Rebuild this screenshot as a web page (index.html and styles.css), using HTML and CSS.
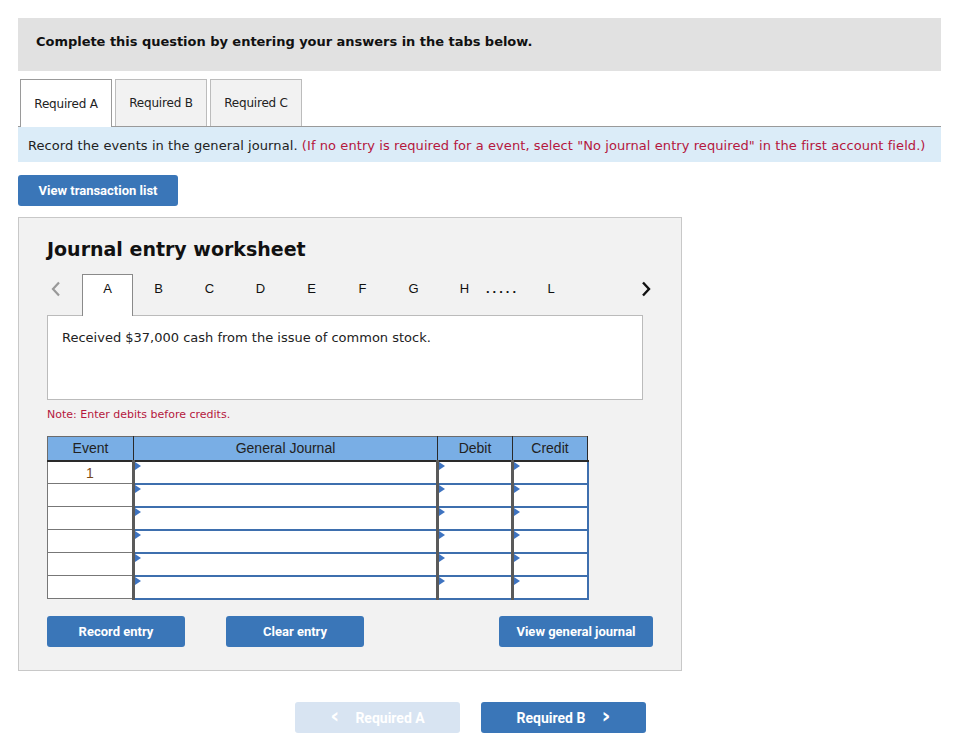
FILE: index.html
```html
<!DOCTYPE html>
<html>
<head>
<meta charset="utf-8">
<link rel="stylesheet" href="styles.css">
</head>
<body>
<div class="page">
  <div class="banner">Complete this question by entering your answers in the tabs below.</div>

  <div class="tabs">
    <div class="tab active">Required A</div>
    <div class="tab">Required B</div>
    <div class="tab">Required C</div>
  </div>

  <div class="instruction">Record the events in the general journal. <span class="red">(If no entry is required for a event, select "No journal entry required" in the first account field.)</span></div>

  <div class="btn-row">
    <button class="btn btn-wide">View transaction list</button>
  </div>

  <div class="worksheet">
    <h2 class="ws-title">Journal entry worksheet</h2>

    <div class="ws-nav">
      <span class="arrow left"><svg width="10" height="16" viewBox="0 0 10 16"><path d="M8 1.5 L2 8 L8 14.5" fill="none" stroke="#999" stroke-width="2.2"/></svg></span>
      <div class="letters">
        <span class="letter current">A</span>
        <span class="letter">B</span>
        <span class="letter">C</span>
        <span class="letter">D</span>
        <span class="letter">E</span>
        <span class="letter">F</span>
        <span class="letter">G</span>
        <span class="letter">H</span>
        <span class="dots">.....</span>
        <span class="letter">L</span>
      </div>
      <span class="arrow right"><svg width="10" height="16" viewBox="0 0 10 16"><path d="M2 1.5 L8 8 L2 14.5" fill="none" stroke="#111" stroke-width="2.4"/></svg></span>
    </div>

    <div class="desc">Received $37,000 cash from the issue of common stock.</div>

    <div class="note">Note: Enter debits before credits.</div>

    <table class="journal">
      <thead>
        <tr><th class="c-ev">Event</th><th class="c-gj">General Journal</th><th class="c-dr">Debit</th><th class="c-cr">Credit</th></tr>
      </thead>
      <tbody>
        <tr><td class="ev">1</td><td class="in"></td><td class="in"></td><td class="in"></td></tr>
        <tr><td class="ev"></td><td class="in"></td><td class="in"></td><td class="in"></td></tr>
        <tr><td class="ev"></td><td class="in"></td><td class="in"></td><td class="in"></td></tr>
        <tr><td class="ev"></td><td class="in"></td><td class="in"></td><td class="in"></td></tr>
        <tr><td class="ev"></td><td class="in"></td><td class="in"></td><td class="in"></td></tr>
        <tr><td class="ev"></td><td class="in"></td><td class="in"></td><td class="in"></td></tr>
      </tbody>
    </table>

    <div class="ws-actions">
      <button class="btn btn-act">Record entry</button>
      <button class="btn btn-act btn-clear">Clear entry</button>
      <span class="spacer"></span>
      <button class="btn btn-view">View general journal</button>
    </div>
  </div>

  <div class="bottom-nav">
    <button class="btn btn-nav disabled"><span class="chev">&lsaquo;</span>Required A</button>
    <button class="btn btn-nav">Required B<span class="chev chev-r">&rsaquo;</span></button>
  </div>
</div>
</body>
</html>
```

FILE: styles.css
```css
* { box-sizing: border-box; }
html, body { margin: 0; padding: 0; background: #fff; }
body { font-family: Verdana, "DejaVu Sans", sans-serif; color: #222; }
.page { padding: 18px 26px 0 18px; width: 967px; }

.banner {
  background: #e1e1e1;
  height: 53px;
  padding: 16px 18px 0 18px;
  font-size: 13px;
  font-weight: bold;
  color: #111;
  letter-spacing: -0.03px;
}

.tabs {
  display: flex;
  gap: 3px;
  padding: 8px 0 0 2px;
  border-bottom: 1px solid #9a9a9a;
  height: 56px;
}
.tab {
  width: 92px;
  height: 47px;
  border: 1px solid #bcbcbc;
  border-bottom: none;
  background: #f2f2f2;
  font-size: 12px;
  display: flex;
  align-items: center;
  justify-content: center;
  color: #222;
  letter-spacing: -0.2px;
}
.tab.active { background: #fff; border-color: #9a9a9a; height: 48px; margin-bottom: -1px; }

.instruction {
  background: #dbecf8;
  height: 35px;
  padding: 11px 10px 0 10px;
  font-size: 13px;
  color: #222;
  white-space: nowrap;
  letter-spacing: 0.08px;
}
.red { color: #b5173d; }

.btn-row { padding-top: 13px; display: flex; }
.btn {
  font-family: "Liberation Sans Narrow", "Arial Narrow", Roboto, sans-serif;
  font-weight: bold;
  color: #fff;
  background: #3a76b8;
  border: none;
  border-radius: 3px;
  font-size: 13px;
  cursor: pointer;
}
.btn-wide { width: 160px; height: 31px; }

.worksheet {
  margin-top: 11px;
  width: 664px;
  height: 454px;
  background: #f2f2f2;
  border: 1px solid #c8c8c8;
  padding: 0 38px 0 28px;
}
.ws-title {
  margin: 18px 0 0 0;
  font-size: 19px;
  font-weight: bold;
  color: #111;
  height: 26px;
  line-height: 26px;
}
.ws-nav {
  display: flex;
  align-items: flex-end;
  height: 53px;
}
.arrow { display: flex; height: 41px; align-items: flex-start; padding-top: 7px; }
.arrow.left { width: 35px; padding-left: 4px; }
.arrow.right { margin-left: auto; margin-right: -8px; }
.letters { display: flex; align-items: flex-end; font-family: "Liberation Sans", Arial, sans-serif; font-size: 13px; color: #111; }
.letter {
  width: 51px;
  height: 41px;
  display: flex;
  align-items: flex-start;
  padding-top: 7px;
  justify-content: center;
}
.letter.current {
  background: #fff;
  border: 1px solid #8a8a8a;
  border-bottom: none;
  height: 42px;
  margin-bottom: -1px;
  padding-top: 6px;
}
.dots {
  height: 41px;
  display: flex;
  align-items: flex-start;
  padding-top: 7px;
  width: 43px;
  letter-spacing: 3px;
  font-weight: bold;
  margin-left: -4px;
}
.ws-nav .letters .letter:last-child { width: 44px; }

.desc {
  background: #fff;
  border: 1px solid #bbb;
  width: 596px;
  height: 85px;
  padding: 14px 14px 0 14px;
  font-size: 13px;
  color: #222;
}
.note {
  margin-top: 8px;
  font-size: 11px;
  color: #b5173d;
  height: 14px;
}

.journal {
  margin-top: 14px;
  border-collapse: collapse;
  font-family: "Liberation Sans", Arial, sans-serif;
  font-size: 14px;
  table-layout: fixed;
  width: 540px;
}
.journal th {
  background: #79aee5;
  color: #222;
  font-weight: normal;
  height: 24px;
  padding: 0;
  border: 1px solid #6c6c6c;
  border-bottom: 2px solid #2a2a2a;
  border-right: 1px solid #2a2a2a;
}
.c-ev { width: 86px; }
.c-gj { width: 304px; }
.c-dr { width: 75px; }
.c-cr { width: 75px; }
.journal td {
  height: 23px;
  padding: 0;
  background: #fff;
  border: 1px solid #777;
}
.journal td.ev {
  text-align: center;
  vertical-align: top;
  padding-top: 3px;
  color: #7a4a1a;
  font-size: 14px;
  border-right: 2px solid #6c6c6c;
}
.journal td.in {
  border: 2px solid #3e6fae;
  border-left: 3px solid #5a5a5a;
  position: relative;
  background: #fff;
}
.journal td.in::before {
  content: "";
  position: absolute;
  left: 0;
  top: 0;
  border-top: 4px solid transparent;
  border-bottom: 4px solid transparent;
  border-left: 6px solid #3e73c0;
}

.ws-actions {
  display: flex;
  margin-top: 16px;
  gap: 41px;
  width: 606px;
}
.btn-act { width: 138px; height: 31px; }
.spacer { flex: 1; }
.btn-view { width: 154px; height: 31px; margin-left: -41px; }

.bottom-nav {
  display: flex;
  gap: 21px;
  padding-left: 277px;
  margin-top: 31px;
}
.btn-nav {
  width: 165px;
  height: 31px;
  font-size: 14px;
  display: flex;
  align-items: center;
  justify-content: center;
}
.btn-nav.disabled { background: #d8e4f2; color: #fff; }
.chev { font-size: 22px; font-weight: bold; margin-right: 16px; line-height: 1; position: relative; top: -2px; font-family: "DejaVu Sans", sans-serif; }
.chev-r { margin-right: 0; margin-left: 16px; }
```
